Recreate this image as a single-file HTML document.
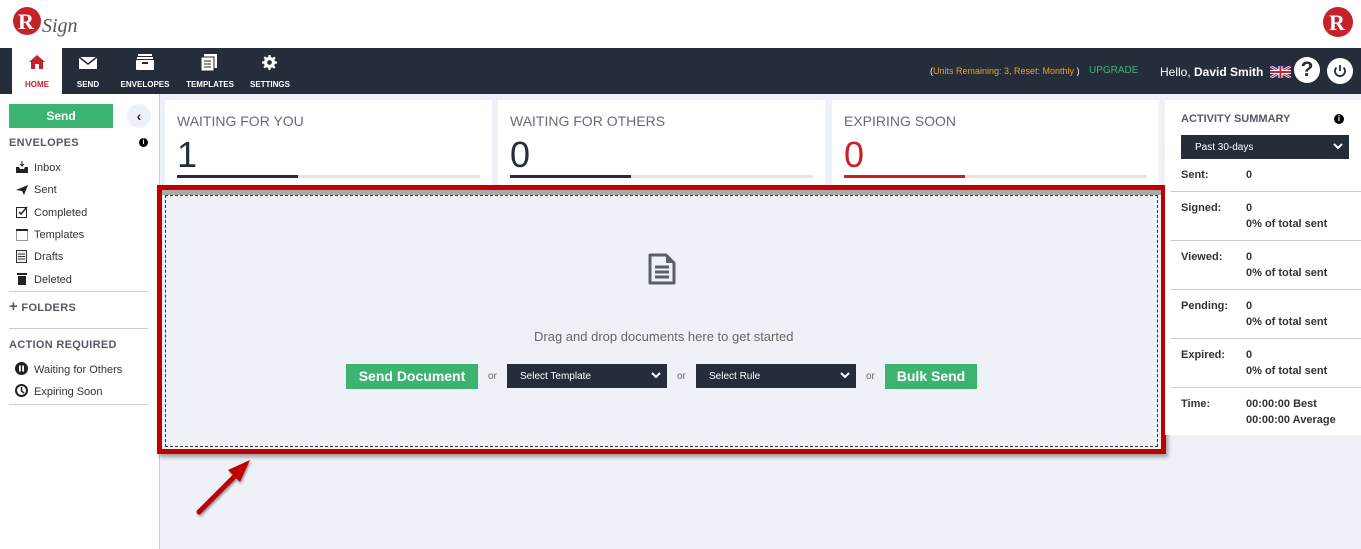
<!DOCTYPE html>
<html><head><meta charset="utf-8"><style>
*{box-sizing:border-box;margin:0;padding:0}
body{width:1361px;height:549px;overflow:hidden;font-family:"Liberation Sans",Arial,sans-serif;background:#eef1f8;position:relative}
.abs{position:absolute}
.top{left:0;top:0;width:1361px;height:48px;background:#fff}
.nav{left:0;top:48px;width:1361px;height:46px;background:#262d3a}
.tab{position:absolute;top:0;height:46px;text-align:center;color:#fff;font-size:8px;font-weight:bold}
.tab .lbl{position:absolute;left:0;right:0;top:32px}
.side{left:0;top:94px;width:160px;height:455px;background:#fff;border-right:1px solid #ccc}
.si{position:absolute;left:34px;font-size:11px;color:#333}
.sh{position:absolute;left:9px;font-size:11px;font-weight:bold;color:#555a66;letter-spacing:.3px}
.hr{position:absolute;left:9px;width:139px;height:1px;background:#ccc}
.card{position:absolute;top:100px;height:90px;background:#fff}
.card .t{position:absolute;left:12px;top:13px;font-size:14px;color:#666b77}
.card .n{position:absolute;left:12px;top:34px;font-size:36px;color:#262d3a}
.card .b{position:absolute;left:12px;top:75px;width:303px;height:3px;background:#e3e3e3}
.card .b i{position:absolute;left:0;top:0;height:3px;width:121px;background:#262d3a}
.rp{left:1165px;top:100px;width:196px;height:335px;background:#fff}
.rl{position:absolute;left:16px;font-size:11px;font-weight:bold;color:#333}
.rv{position:absolute;left:81px;font-size:11px;font-weight:bold;color:#333;line-height:16px}
.rh{position:absolute;left:6px;width:190px;height:1px;background:#ccc}
.btn{position:absolute;top:364px;height:25px;background:#3cb371;color:#fff;font-weight:bold;font-size:14px;text-align:center;line-height:25px}
.sel{position:absolute;top:364px;height:24px;width:160px;background:#262d3a;color:#fff;font-size:10px;line-height:26px;padding-left:13px}
.sel svg{position:absolute;right:6px;top:8px}
.or{position:absolute;top:371px;font-size:10px;color:#666}
</style></head><body>
<div class="abs top">
 <svg class="abs" style="left:12px;top:6px" width="66" height="36" viewBox="0 0 66 36"><circle cx="15" cy="15" r="14" fill="#c7222a"/><text x="6" y="23" font-family="Liberation Serif" font-weight="bold" font-size="22" fill="#fff">R</text><text x="30" y="26" font-family="Liberation Serif" font-style="italic" font-size="20" fill="#555">Sign</text></svg>
 <svg class="abs" style="left:1322px;top:6px" width="32" height="32"><circle cx="16" cy="16" r="15" fill="#c7222a"/><text x="7" y="24" font-family="Liberation Serif" font-weight="bold" font-size="22" fill="#fff">R</text></svg>
</div>
<div class="abs nav">
 <div class="tab" style="left:12px;width:50px;background:#fff;color:#c7222a"><svg style="position:absolute;left:17px;top:7px" width="16" height="14" viewBox="0 0 16 14"><path d="M8 0L0 7h2v7h4V9h4v5h4V7h2z" fill="#c7222a"/></svg><div class="lbl">HOME</div></div>
 <div class="tab" style="left:68px;width:40px"><svg style="position:absolute;left:11px;top:9px" width="18" height="12"><rect width="18" height="12" fill="#fff"/><path d="M0 0l9 7 9-7" stroke="#262d3a" stroke-width="1.5" fill="none"/></svg><div class="lbl">SEND</div></div>
 <div class="tab" style="left:117px;width:56px"><svg style="position:absolute;left:19px;top:6px" width="18" height="16"><rect x="2" y="0" width="14" height="2" fill="#fff"/><rect x="1" y="3" width="16" height="2" fill="#fff"/><rect x="0" y="6" width="18" height="10" rx="1" fill="#fff"/><rect x="6" y="8" width="6" height="2" fill="#262d3a"/></svg><div class="lbl">ENVELOPES</div></div>
 <div class="tab" style="left:183px;width:54px"><svg style="position:absolute;left:18px;top:6px" width="16" height="17"><rect x="3" y="0" width="13" height="14" fill="#fff"/><rect x="0" y="3" width="13" height="14" fill="#fff" stroke="#262d3a"/><path d="M3 7h7M3 10h7M3 13h7" stroke="#262d3a"/></svg><div class="lbl">TEMPLATES</div></div>
 <div class="tab" style="left:247px;width:46px"><svg style="position:absolute;left:15px;top:7px" width="15" height="15" viewBox="0 0 16 16"><path d="M7 0h2l.5 2.3 1.6.7 2-1.3 1.4 1.4-1.3 2 .7 1.6L16 7v2l-2.3.5-.7 1.6 1.3 2-1.4 1.4-2-1.3-1.6.7L9 16H7l-.5-2.3-1.6-.7-2 1.3-1.4-1.4 1.3-2-.7-1.6L0 9V7l2.3-.5.7-1.6-1.3-2 1.4-1.4 2 1.3 1.6-.7z" fill="#fff"/><circle cx="8" cy="8" r="2.5" fill="#262d3a"/></svg><div class="lbl">SETTINGS</div></div>
 <div class="abs" style="left:930px;top:18px;font-size:9px;color:#f0a020"><span style="color:#fff">(</span>Units Remaining: 3, Reset: Monthly <span style="color:#fff">)</span></div>
 <div class="abs" style="left:1089px;top:17px;font-size:10px;color:#3cb371">UPGRADE</div>
 <div class="abs" style="left:1160px;top:17px;font-size:12px;color:#fff">Hello, <b>David Smith</b></div>
 <svg class="abs" style="left:1270px;top:18px" width="21" height="12" viewBox="0 0 21 12"><rect width="21" height="12" fill="#1a3a8a"/><path d="M0 0L21 12M21 0L0 12" stroke="#fff" stroke-width="2.5"/><path d="M0 0L21 12M21 0L0 12" stroke="#c7222a" stroke-width="1"/><path d="M10.5 0v12M0 6h21" stroke="#fff" stroke-width="4"/><path d="M10.5 0v12M0 6h21" stroke="#c7222a" stroke-width="2"/></svg>
 <div class="abs" style="left:1294px;top:9px;width:26px;height:26px;border-radius:50%;background:#fff;color:#262d3a;font-weight:bold;font-size:21px;text-align:center;line-height:26px">?</div>
 <div class="abs" style="left:1327px;top:10px;width:26px;height:26px;border-radius:50%;background:#fff"><svg width="26" height="26"><path d="M9.5 9.5a5 5 0 1 0 7 0" stroke="#262d3a" stroke-width="1.8" fill="none"/><path d="M13 7v6" stroke="#262d3a" stroke-width="1.8"/></svg></div>
</div>
<div class="abs side">
 <div class="abs" style="left:9px;top:10px;width:104px;height:24px;background:#3cb371;color:#fff;font-weight:bold;font-size:12px;text-align:center;line-height:24px">Send</div>
 <div class="abs" style="left:127px;top:10px;width:24px;height:24px;border-radius:50%;background:#eef1f8;color:#262d3a;text-align:center;line-height:24px;font-weight:bold;font-size:14px">‹</div>
 <div class="sh" style="top:43px">ENVELOPES</div>
 <div class="abs" style="left:139px;top:44px;width:9px;height:9px;border-radius:50%;background:#000;color:#fff;font-size:7px;font-weight:bold;text-align:center;line-height:9px">i</div>
 <svg class="abs" style="left:16px;top:67px" width="12" height="12"><path d="M0 6h3l1 2h4l1-2h3v6H0z" fill="#222"/><path d="M6 0v5M4 3l2 2 2-2" stroke="#222" fill="none"/></svg><div class="si" style="top:68px">Inbox</div>
 <svg class="abs" style="left:16px;top:91px" width="12" height="10"><path d="M0 5L12 0 8 10 6 6z" fill="#222"/></svg><div class="si" style="top:90px">Sent</div>
 <svg class="abs" style="left:16px;top:112px" width="12" height="12"><rect x=".5" y="1.5" width="10" height="10" fill="none" stroke="#222"/><path d="M3 6l2 2 6-7" stroke="#222" stroke-width="1.5" fill="none"/></svg><div class="si" style="top:113px">Completed</div>
 <svg class="abs" style="left:16px;top:135px" width="12" height="12"><rect x=".5" y=".5" width="11" height="11" fill="none" stroke="#999"/><rect width="12" height="2" fill="#222"/></svg><div class="si" style="top:135px">Templates</div>
 <svg class="abs" style="left:16px;top:156px" width="11" height="13"><rect x=".5" y=".5" width="10" height="12" fill="#eee" stroke="#333"/><path d="M2 4h7M2 6.5h7M2 9h7" stroke="#333"/></svg><div class="si" style="top:157px">Drafts</div>
 <svg class="abs" style="left:17px;top:179px" width="10" height="12"><rect x="0" y="0" width="10" height="2" fill="#222"/><rect x="1" y="3" width="8" height="9" fill="#222"/></svg><div class="si" style="top:180px">Deleted</div>
 <div class="hr" style="top:197px"></div>
 <div class="sh" style="top:208px;font-size:11px"><span style="font-size:15px;line-height:10px">+</span> FOLDERS</div>
 <div class="hr" style="top:234px"></div>
 <div class="sh" style="top:245px">ACTION REQUIRED</div>
 <svg class="abs" style="left:15px;top:268px" width="13" height="13"><circle cx="6.5" cy="6.5" r="6.5" fill="#222"/><rect x="4" y="3.5" width="1.8" height="6" fill="#fff"/><rect x="7.2" y="3.5" width="1.8" height="6" fill="#fff"/></svg><div class="si" style="top:270px">Waiting for Others</div>
 <svg class="abs" style="left:15px;top:290px" width="13" height="13"><circle cx="6.5" cy="6.5" r="5.5" fill="none" stroke="#222" stroke-width="2"/><path d="M6.5 3v4l2.5 2" stroke="#222" stroke-width="1.5" fill="none"/></svg><div class="si" style="top:292px">Expiring Soon</div>
 <div class="hr" style="top:310px"></div>
</div>
<div class="card" style="left:165px;width:327px"><div class="t">WAITING FOR YOU</div><div class="n">1</div><div class="b"><i></i></div></div>
<div class="card" style="left:498px;width:327px"><div class="t">WAITING FOR OTHERS</div><div class="n">0</div><div class="b"><i></i></div></div>
<div class="card" style="left:832px;width:327px"><div class="t">EXPIRING SOON</div><div class="n" style="color:#c7222a">0</div><div class="b"><i style="background:#c7222a"></i></div></div>
<div class="abs" style="left:157px;top:185px;width:1009px;height:269px;border:5px solid #c00000;background:#eef1f8;box-shadow:2px 3px 4px rgba(0,0,0,.35)">
 <div class="abs" style="left:0;top:0;right:0;height:5px;background:#aaa"></div>
 <div class="abs" style="left:3px;top:5px;right:3px;bottom:2px;border:1px dashed #333"></div>
</div>
<svg class="abs" style="left:647px;top:253px" width="29" height="33" viewBox="0 0 29 33"><path d="M3 2h16l8 8v20H3z" fill="none" stroke="#5a5f6a" stroke-width="3" stroke-linejoin="round"/><path d="M19 2v8h8" fill="#5a5f6a"/><path d="M8 14h14M8 19h14M8 24h14" stroke="#5a5f6a" stroke-width="3"/></svg>
<div class="abs" style="left:534px;top:329px;font-size:13px;color:#666">Drag and drop documents here to get started</div>
<div class="btn" style="left:346px;width:132px">Send Document</div>
<div class="or" style="left:488px">or</div>
<div class="sel" style="left:507px">Select Template<svg width="10" height="8"><path d="M1 1l4 4 4-4" stroke="#fff" stroke-width="2" fill="none"/></svg></div>
<div class="or" style="left:677px">or</div>
<div class="sel" style="left:696px">Select Rule<svg width="10" height="8"><path d="M1 1l4 4 4-4" stroke="#fff" stroke-width="2" fill="none"/></svg></div>
<div class="or" style="left:866px">or</div>
<div class="btn" style="left:885px;width:92px">Bulk Send</div>
<svg class="abs" style="left:190px;top:450px" width="70" height="70"><g filter="drop-shadow(1px 2px 1px rgba(0,0,0,.35))"><path d="M9 62L50 21" stroke="#c00000" stroke-width="5" stroke-linecap="round"/><path d="M60 10L38 20 50 32z" fill="#c00000"/></g></svg>
<div class="abs rp">
 <div class="abs" style="left:16px;top:13px;font-size:11px;font-weight:bold;color:#555a66">ACTIVITY SUMMARY</div>
 <div class="abs" style="left:169px;top:14px;width:10px;height:10px;border-radius:50%;background:#000;color:#fff;font-size:8px;font-weight:bold;text-align:center;line-height:10px">i</div>
 <div class="abs" style="left:16px;top:35px;width:168px;height:24px;background:#262d3a;color:#fff;font-size:10px;line-height:26px;padding-left:14px">Past 30-days<svg style="position:absolute;right:6px;top:8px" width="10" height="8"><path d="M1 1l4 4 4-4" stroke="#fff" stroke-width="2" fill="none"/></svg></div>
 <div class="rl" style="top:69px">Sent:</div><div class="rv" style="top:67px">0</div>
 <div class="rh" style="top:91px"></div>
 <div class="rl" style="top:102px">Signed:</div><div class="rv" style="top:100px">0<br>0% of total sent</div>
 <div class="rh" style="top:140px"></div>
 <div class="rl" style="top:151px">Viewed:</div><div class="rv" style="top:149px">0<br>0% of total sent</div>
 <div class="rh" style="top:189px"></div>
 <div class="rl" style="top:200px">Pending:</div><div class="rv" style="top:198px">0<br>0% of total sent</div>
 <div class="rh" style="top:238px"></div>
 <div class="rl" style="top:249px">Expired:</div><div class="rv" style="top:247px">0<br>0% of total sent</div>
 <div class="rh" style="top:287px"></div>
 <div class="rl" style="top:298px">Time:</div><div class="rv" style="top:296px">00:00:00 Best<br>00:00:00 Average</div>
</div>
</body></html>
